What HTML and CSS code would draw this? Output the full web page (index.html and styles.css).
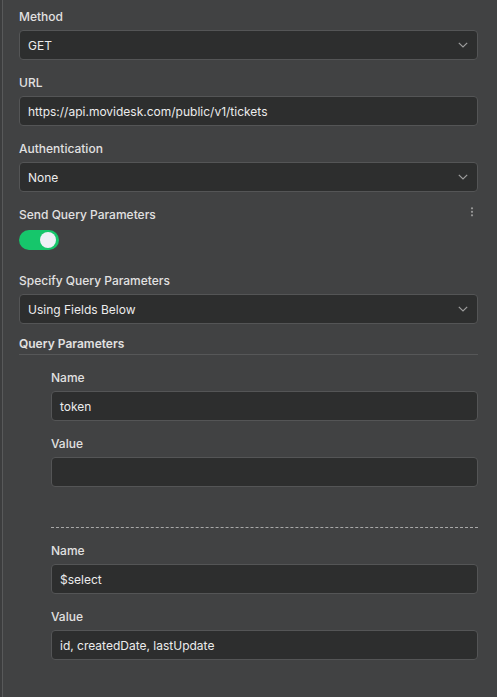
FILE: index.html
```html
<!DOCTYPE html>
<html lang="en">
<head>
<meta charset="utf-8">
<title>HTTP Request parameters</title>
<link rel="stylesheet" href="styles.css">
</head>
<body>
<div class="panel">
  <div class="param">
    <div class="label">Method</div>
    <div class="field select"><span class="value">GET</span><svg class="chev" width="10" height="6" viewBox="0 0 10 6"><polyline points="0.8,0.8 5,5 9.2,0.8" fill="none" stroke="#9d9d9d" stroke-width="1.2"/></svg></div>
  </div>
  <div class="param">
    <div class="label">URL</div>
    <div class="field"><span class="value">https://api.movidesk.com/public/v1/tickets</span></div>
  </div>
  <div class="param">
    <div class="label">Authentication</div>
    <div class="field select"><span class="value">None</span><svg class="chev" width="10" height="6" viewBox="0 0 10 6"><polyline points="0.8,0.8 5,5 9.2,0.8" fill="none" stroke="#9d9d9d" stroke-width="1.2"/></svg></div>
  </div>
  <div class="param switch-param">
    <div class="label-row">
      <div class="label">Send Query Parameters</div>
      <svg class="kebab" width="12" height="14" viewBox="0 0 12 14"><circle cx="6" cy="3.3" r="1.1" fill="#9a9a9a"/><circle cx="6" cy="6.8" r="1.1" fill="#9a9a9a"/><circle cx="6" cy="10.3" r="1.1" fill="#9a9a9a"/></svg>
    </div>
    <span class="switch"><span class="knob"></span></span>
  </div>
  <div class="param">
    <div class="label">Specify Query Parameters</div>
    <div class="field select"><span class="value">Using Fields Below</span><svg class="chev" width="10" height="6" viewBox="0 0 10 6"><polyline points="0.8,0.8 5,5 9.2,0.8" fill="none" stroke="#9d9d9d" stroke-width="1.2"/></svg></div>
  </div>
  <div class="collection">
    <div class="collection-title">Query Parameters</div>
    <div class="items">
      <div class="item">
        <div class="param">
          <div class="label">Name</div>
          <div class="field"><span class="value">token</span></div>
        </div>
        <div class="param">
          <div class="label">Value</div>
          <div class="field"><span class="value"></span></div>
        </div>
      </div>
      <div class="item">
        <div class="param">
          <div class="label">Name</div>
          <div class="field"><span class="value">$select</span></div>
        </div>
        <div class="param">
          <div class="label">Value</div>
          <div class="field"><span class="value">id, createdDate, lastUpdate</span></div>
        </div>
      </div>
    </div>
  </div>
</div>
</body>
</html>
```

FILE: styles.css
```css
html, body {
  margin: 0;
  padding: 0;
  background: #3c3d3e;
}
body {
  font-family: Inter, "Liberation Sans", sans-serif;
  font-size: 12px;
  color: #e3e3e3;
}
.panel {
  margin-left: 2px;
  border-left: 1px solid #58595a;
  background: #414243;
  min-height: 697px;
  box-sizing: border-box;
  padding: 7px 19px 0 16px;
}
.param + .param {
  margin-top: 13px;
}
.label {
  line-height: 18px;
  font-weight: 500;
  color: #e1e1e1;
  padding-top: 1px;
  margin-bottom: 4px;
}
.field {
  height: 30px;
  box-sizing: border-box;
  border: 1px solid #545556;
  border-radius: 4px;
  background: #2d2e2e;
  display: flex;
  align-items: center;
  padding: 0 9px 0 8px;
}
.value {
  flex: 1;
  color: #ececec;
  white-space: nowrap;
}
.chev {
  flex: none;
}
.label-row {
  display: flex;
  justify-content: space-between;
  align-items: flex-start;
}
.label-row .label {
  margin-bottom: 0;
}
.switch-param {
  padding-bottom: 8px;
}
.switch {
  display: block;
  position: relative;
  margin-top: 6px;
  width: 40px;
  height: 20px;
  border-radius: 10px;
  background: #16c66b;
}
.knob {
  position: absolute;
  top: 2px;
  left: 21px;
  width: 16px;
  height: 16px;
  border-radius: 50%;
  background: #eef0f6;
}
.collection {
  margin-top: 10px;
}
.collection-title {
  line-height: 18px;
  font-weight: 600;
  color: #e1e1e1;
  padding-top: 1px;
  padding-bottom: 1px;
  border-bottom: 1px solid #565758;
}
.items {
  padding-left: 32px;
}
.item {
  padding-top: 13px;
}
.item + .item {
  border-top: 1px dashed #a9a9a9;
}
.item:not(:last-child) {
  padding-bottom: 40px;
}
```
